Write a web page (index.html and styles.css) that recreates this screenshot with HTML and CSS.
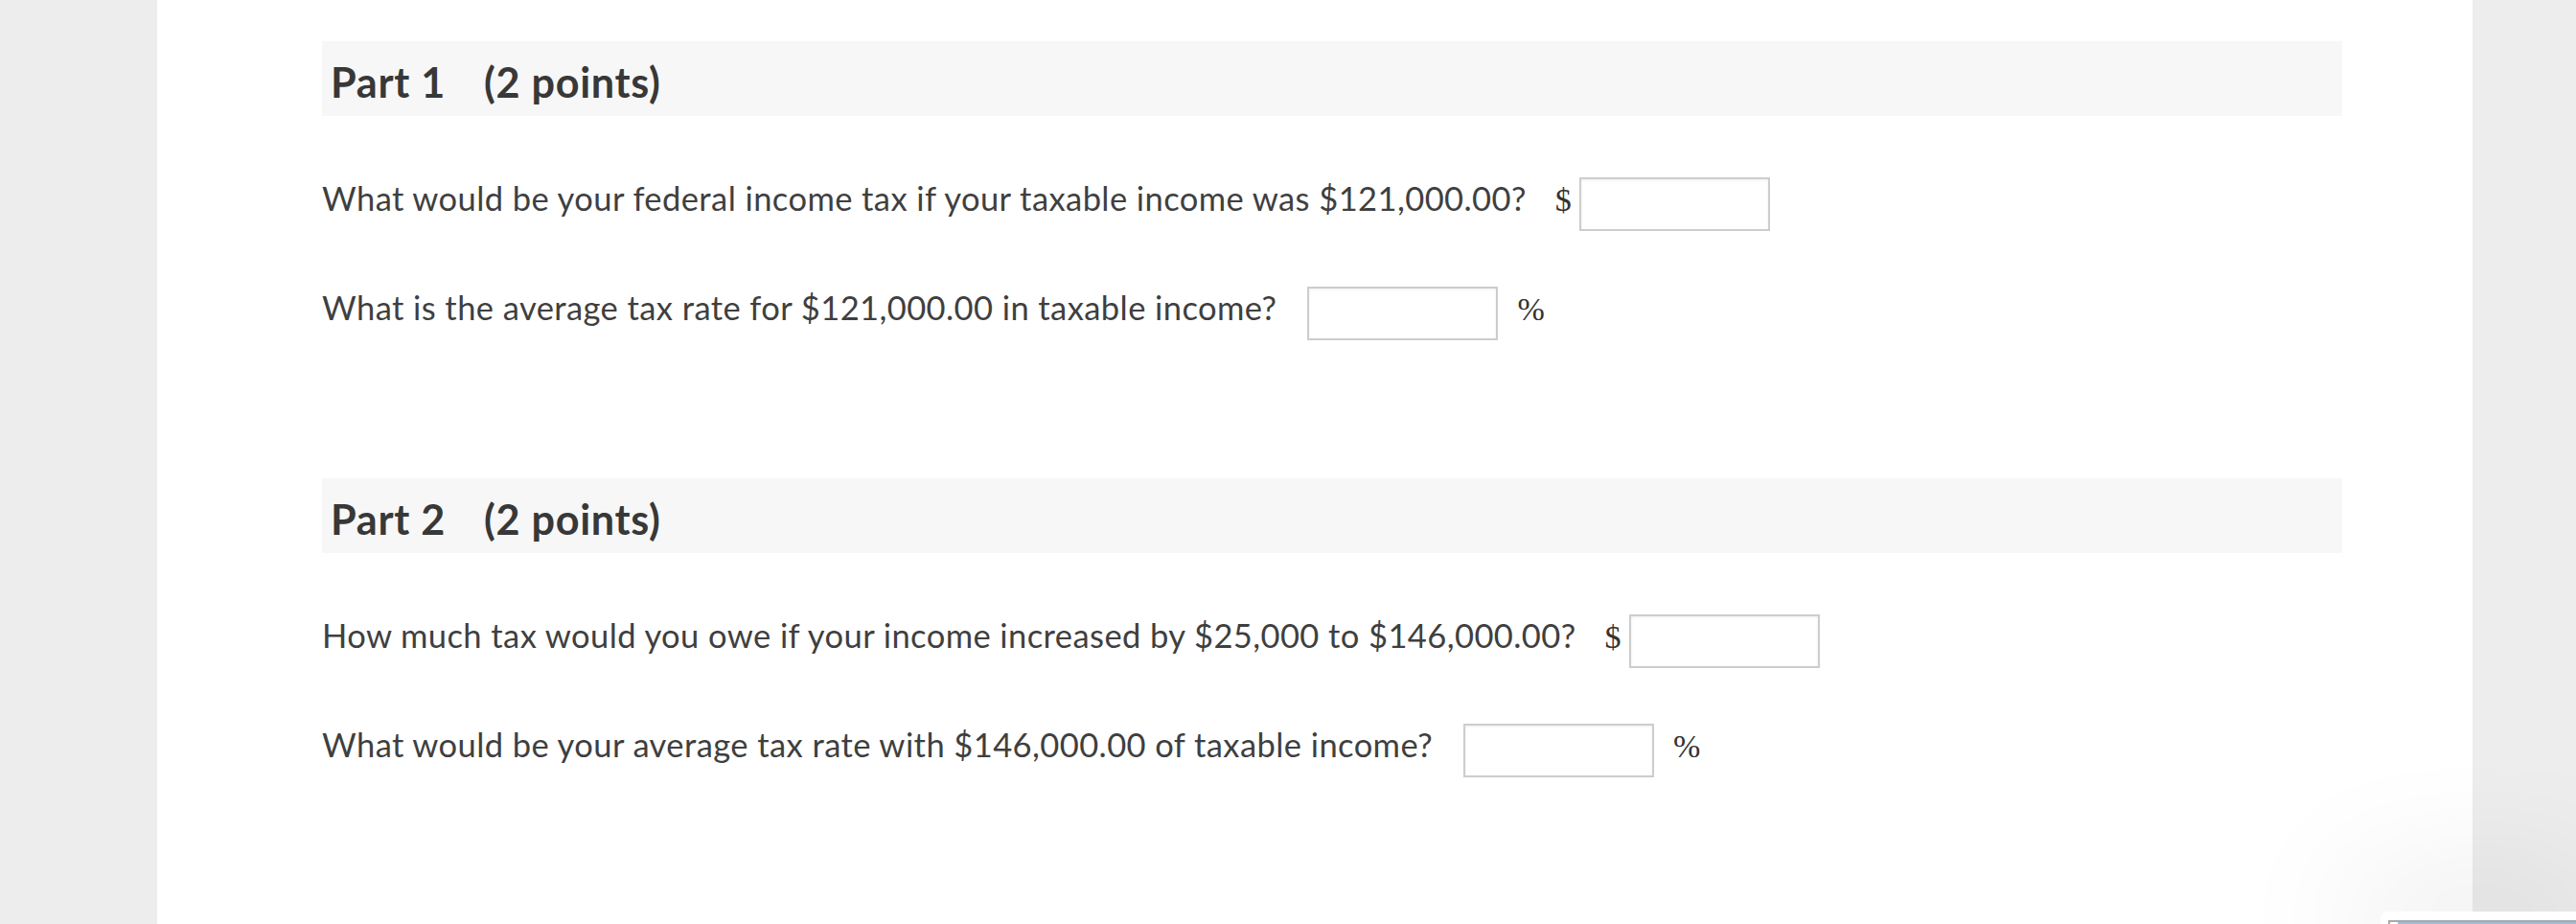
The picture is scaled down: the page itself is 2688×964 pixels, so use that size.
FILE: index.html
```html
<!DOCTYPE html>
<html lang="en">
<head>
<meta charset="utf-8">
<title>Quiz</title>
<link rel="stylesheet" href="styles.css">
</head>
<body>
<div class="page">
  <section class="part">
    <h2 class="part-header"><span class="part-name">Part 1</span><span class="part-points">(2 points)</span></h2>
    <div class="question">
      <span class="q-text">What would be your federal income tax if your taxable income was $121,000.00?</span>
      <span class="unit unit-before">$</span>
      <input class="answer answer-after-unit" type="text" aria-label="Federal income tax">
    </div>
    <div class="question">
      <span class="q-text">What is the average tax rate for $121,000.00 in taxable income?</span>
      <input class="answer" type="text" aria-label="Average tax rate">
      <span class="unit unit-after">%</span>
    </div>
  </section>
  <section class="part part-second">
    <h2 class="part-header"><span class="part-name">Part 2</span><span class="part-points">(2 points)</span></h2>
    <div class="question">
      <span class="q-text">How much tax would you owe if your income increased by $25,000 to $146,000.00?</span>
      <span class="unit unit-before">$</span>
      <input class="answer answer-after-unit" type="text" aria-label="Tax owed">
    </div>
    <div class="question">
      <span class="q-text">What would be your average tax rate with $146,000.00 of taxable income?</span>
      <input class="answer" type="text" aria-label="Average tax rate at new income">
      <span class="unit unit-after">%</span>
    </div>
  </section>
</div>
<div class="popup"><div class="popup-inner"></div></div>
</body>
</html>
```

FILE: styles.css
```css
html, body {
  margin: 0;
  padding: 0;
}
body {
  background: #ededed;
  height: 964px;
  overflow: hidden;
  font-family: Lato, "Liberation Sans", sans-serif;
  color: #3f3f3f;
}
.page {
  margin-left: 164px;
  width: 2416px;
  min-height: 964px;
  box-sizing: border-box;
  background: #fff;
  padding: 43px 136px 0 172px;
}
.part-second {
  margin-top: 144px;
}
.part-header {
  margin: 0;
  height: 78px;
  box-sizing: border-box;
  background: #f7f7f7;
  padding: 16px 0 10px 9px;
  font-size: 43.2px;
  line-height: 52px;
  font-weight: 700;
  letter-spacing: 0.7px;
  color: #383838;
  display: flex;
}
.part-points {
  margin-left: 40px;
}
.question {
  display: flex;
  align-items: center;
  height: 56px;
  margin-top: 58px;
}
.part-header + .question {
  margin-top: 64px;
}
.q-text {
  font-size: 34.5px;
  letter-spacing: 0.42px;
  line-height: 40px;
  padding-bottom: 12px;
}
.unit {
  font-family: "Liberation Serif", serif;
  font-size: 34px;
  line-height: 40px;
  padding-bottom: 8px;
  color: #333;
}
.unit-before {
  margin-left: 30px;
}
.unit-after {
  margin-left: 20px;
}
.answer {
  width: 199px;
  height: 56px;
  box-sizing: border-box;
  margin: 0 0 0 32px;
  padding: 0 8px;
  border: 2px solid #cdcdcd;
  border-radius: 0;
  background: #fff;
  box-shadow: inset 0 1px 3px rgba(0, 0, 0, 0.07);
  font-family: Lato, sans-serif;
  font-size: 30px;
  outline: none;
}
.answer-after-unit {
  margin-left: 8px;
}
.popup {
  position: absolute;
  left: 2484px;
  top: 951px;
  width: 204px;
  height: 13px;
  overflow: hidden;
  background: #fff;
  border-radius: 7px 0 0 0;
  box-shadow: 0 0 140px 30px rgba(0, 0, 0, 0.1);
}
.popup-inner {
  margin: 9px 0 0 8px;
  height: 60px;
  border: 2px solid #a9a9a9;
  border-right: 0;
  background: linear-gradient(to right, #fff 0, #fff 8px, #9fbcd6 8px);
}
```
